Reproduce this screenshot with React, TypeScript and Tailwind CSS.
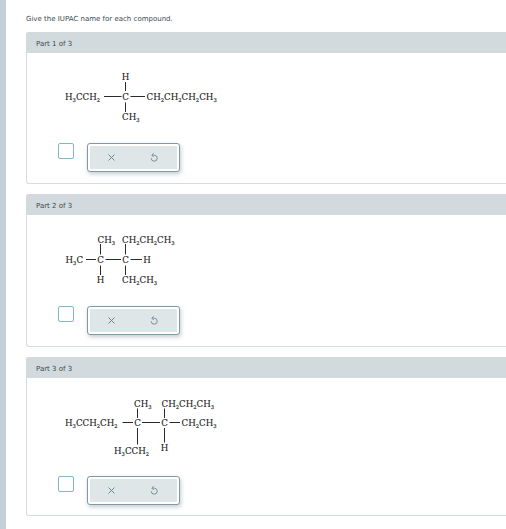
import React from "react";

type Label = { x: number; y: number; t: string; mid?: boolean };
type Bond = [number, number, number, number];

// digits in a label are drawn as subscripts
const Formula = ({ x, y, t, mid }: Label) => {
  const parts = t.split(/(\d)/).filter(Boolean);
  let down = false;
  return (
    <text x={x} y={y} textAnchor={mid ? "middle" : "start"} fontSize={8.7} fill="#1c1c1c" stroke="#1c1c1c" strokeWidth={0.12} fontFamily="'DejaVu Serif', serif">
      {parts.map((p, i) => {
        const sub = /\d/.test(p);
        const dy = sub ? 2 : down ? -2 : 0;
        down = sub;
        return (
          <tspan key={i} dy={dy} fontSize={sub ? 5.2 : 8.7}>
            {p}
          </tspan>
        );
      })}
    </text>
  );
};

const Molecule = ({ top, height, labels, bonds }: { top: number; height: number; labels: Label[]; bonds: Bond[] }) => (
  <svg className="block" width={480} height={height} viewBox={`26 ${top} 480 ${height}`}>
    {bonds.map((b, i) => (
      <line key={i} x1={b[0]} y1={b[1]} x2={b[2]} y2={b[3]} stroke="#2a2a2a" strokeWidth={1} />
    ))}
    {labels.map((l, i) => (
      <Formula key={i} {...l} />
    ))}
  </svg>
);

const AnswerRow = () => (
  <div className="flex items-start gap-[13px] pl-[31px]">
    <div className="w-[16px] h-[16px] rounded-[2px] border border-[#7fb9c4] bg-white" />
    <div className="w-[93px] h-[29px] rounded-[3px] border border-[#7f9aa5] bg-white p-[2px] shadow-[1px_2px_4px_rgba(90,110,120,0.35)]">
      <div className="flex h-full items-center rounded-[1px] bg-[#dfe6e8] pl-[17px] gap-[33px]">
        <svg width="9" height="9" viewBox="0 0 9 9" fill="none" stroke="#6f8791" strokeWidth="1">
          <path d="M1.5 1.5l6 6M7.5 1.5l-6 6" />
        </svg>
        <svg width="10" height="11" viewBox="0 0 10 11" fill="none" stroke="#6f8791" strokeWidth="0.9">
          <path d="M3.2 3.2h2.2a3 3 0 1 1-3.2 3" />
          <path d="M4.6 1.2L2.8 3.2l1.8 1.8" />
        </svg>
      </div>
    </div>
  </div>
);

const Part = ({ title, children, gap }: { title: string; children: React.ReactNode; gap: string }) => (
  <section className={`border border-r-0 border-[#d5dcdf] rounded-l-[3px] ${gap}`}>
    <div className="h-[21px] -mt-px -ml-px bg-[#d2dadd] rounded-tl-[3px] flex items-center pl-[10px] pt-[3px] text-[7px] text-[#3c4a50]">
      {title}
    </div>
    {children}
    <AnswerRow />
  </section>
);

export default function App() {
  return (
    <div className="flex w-[506px] h-[529px] overflow-hidden bg-white font-['DejaVu_Sans',sans-serif]">
      <div className="w-[6px] shrink-0 bg-[#c3d0d8]" />
      <main className="flex-1 pl-[20px]">
        <p className="h-[32px] pt-[14px] text-[7px] leading-[10px] text-[#3c4a50]">Give the IUPAC name for each compound.</p>
        <div className="flex flex-col gap-[10px]">
          <Part title="Part 1 of 3" gap="pb-[11px]">
            <Molecule
              top={53}
              height={90}
              labels={[
                { x: 124.5, y: 80, t: "H", mid: true },
                { x: 64, y: 100, t: "H3CCH2" },
                { x: 124.5, y: 100, t: "C", mid: true },
                { x: 145.5, y: 100, t: "CH2CH2CH2CH3" },
                { x: 121, y: 120, t: "CH3" },
              ]}
              bonds={[
                [103, 96.5, 120.5, 96.5],
                [129.5, 96.5, 144, 96.5],
                [124.5, 82, 124.5, 91],
                [124.5, 102.5, 124.5, 112],
              ]}
            />
          </Part>
          <Part title="Part 2 of 3" gap="pb-[11px]">
            <Molecule
              top={215}
              height={91}
              labels={[
                { x: 96.5, y: 242.5, t: "CH3" },
                { x: 121, y: 242.5, t: "CH2CH2CH3" },
                { x: 64.5, y: 263, t: "H3C" },
                { x: 99.5, y: 263, t: "C", mid: true },
                { x: 124.5, y: 263, t: "C", mid: true },
                { x: 146, y: 263, t: "H", mid: true },
                { x: 99.5, y: 283, t: "H", mid: true },
                { x: 121, y: 283, t: "CH2CH3" },
              ]}
              bonds={[
                [85, 259.5, 95, 259.5],
                [104.5, 259.5, 120, 259.5],
                [129.5, 259.5, 141, 259.5],
                [99.5, 244, 99.5, 254.5],
                [99.5, 265.5, 99.5, 275],
                [124.5, 244, 124.5, 254.5],
                [124.5, 265.5, 124.5, 275],
              ]}
            />
          </Part>
          <Part title="Part 3 of 3" gap="pb-[10px]">
            <Molecule
              top={378}
              height={98}
              labels={[
                { x: 133, y: 406.5, t: "CH3" },
                { x: 160.5, y: 406.5, t: "CH2CH2CH3" },
                { x: 64, y: 426, t: "H3CCH2CH2" },
                { x: 136.5, y: 426, t: "C", mid: true },
                { x: 163.5, y: 426, t: "C", mid: true },
                { x: 180.5, y: 426, t: "CH2CH3" },
                { x: 113, y: 453.5, t: "H3CCH2" },
                { x: 163.5, y: 450.5, t: "H", mid: true },
              ]}
              bonds={[
                [121.5, 422.5, 132, 422.5],
                [141, 422.5, 159, 422.5],
                [168.5, 422.5, 179, 422.5],
                [136.5, 408.5, 136.5, 418],
                [136.5, 428, 136.5, 444.5],
                [163.5, 408.5, 163.5, 418],
                [163.5, 428, 163.5, 442.5],
              ]}
            />
          </Part>
        </div>
      </main>
    </div>
  );
}
